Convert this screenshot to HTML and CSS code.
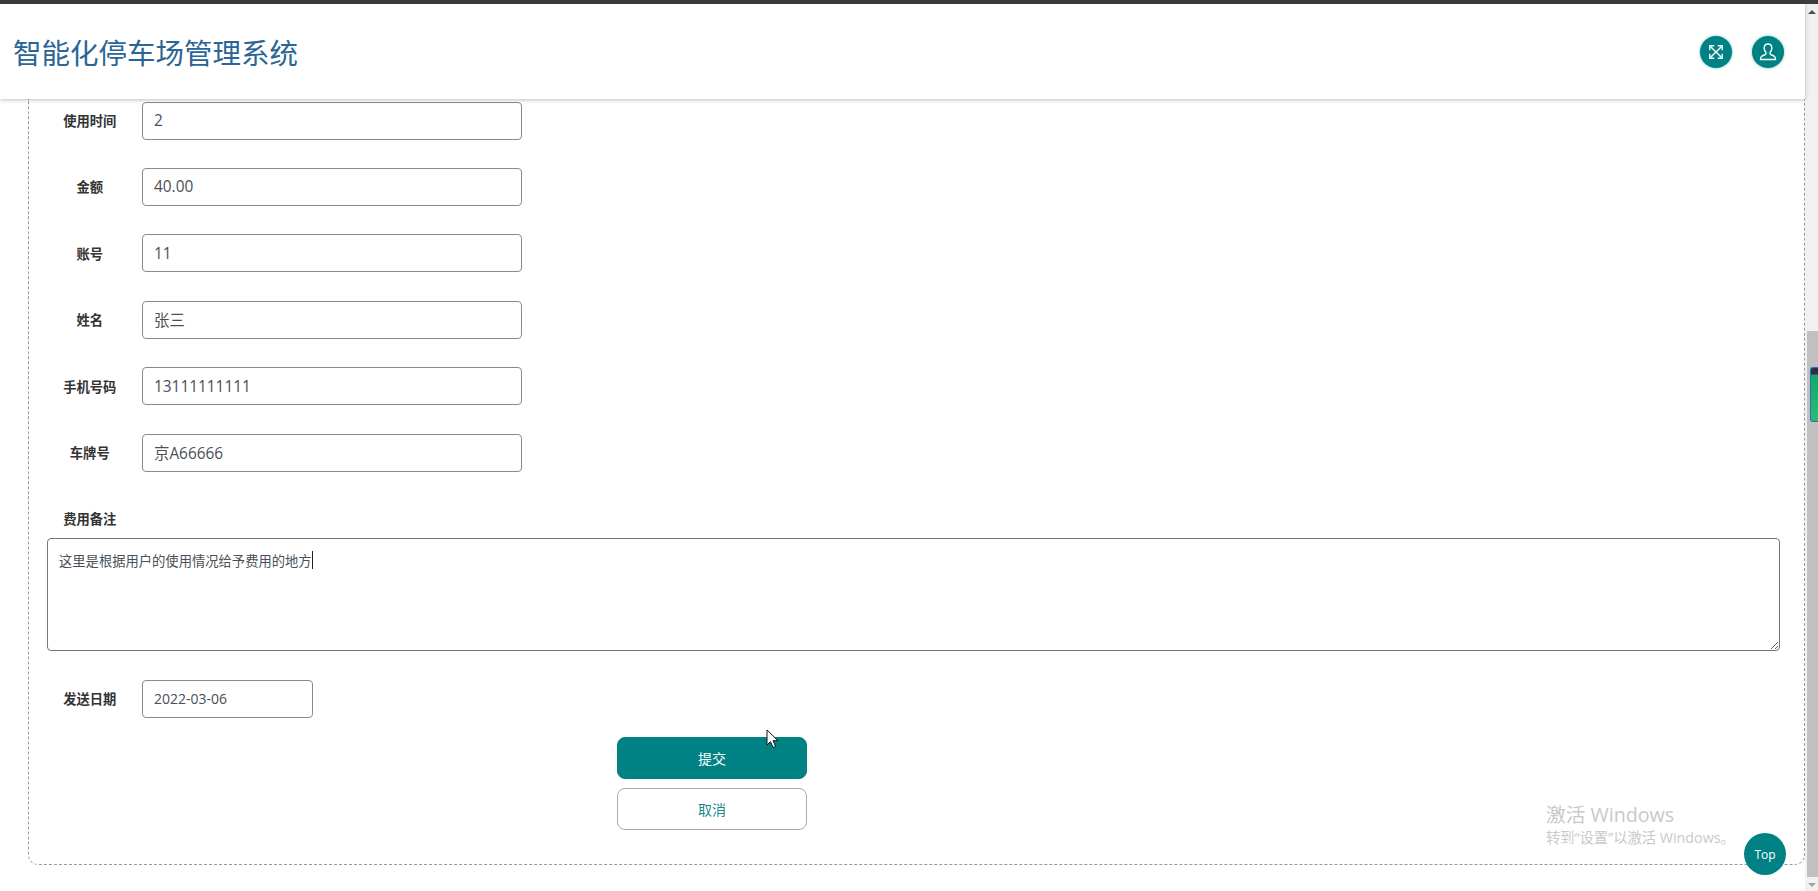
FILE: index.html
```html
<!DOCTYPE html>
<html lang="zh-CN">
<head>
    <meta charset="UTF-8">
    <title>智能化停车场管理系统</title>
    <link rel="stylesheet" href="styles.css">
</head>
<body>
    <div class="top-strip"></div>

    <div class="app">
        <div class="page">
            <header class="header">
                <h1 class="title">智能化停车场管理系统</h1>
                <div class="header-actions">
                    <span class="round-btn">
                        <svg width="16" height="16" viewBox="0 0 18 18" fill="none" stroke="#fff" stroke-width="1.6">
                            <path d="M3 3l12 12M15 3L3 15"/>
                            <path d="M2 7V2h5M11 2h5v5M16 11v5h-5M7 16H2v-5" stroke-width="1.5"/>
                        </svg>
                    </span>
                    <span class="round-btn">
                        <svg width="20" height="20" viewBox="0 0 20 20" fill="none" stroke="#fff" stroke-width="1.4">
                            <path d="M10 2c-2.4 0-3.8 1.8-3.8 4 0 1.8.7 3.3 1.7 4.2v1.3c0 .7-.5 1.1-1.2 1.4l-2.6 1.1C3 14.600 2.500 15.500 2.500 17.500h15c0-2-.5-2.900-1.600-3.500l-2.600-1.100c-.7-.3-1.200-.7-1.200-1.400v-1.300c1-.9 1.700-2.400 1.700-4.200 0-2.200-1.400-4-3.800-4z"/>
                        </svg>
                    </span>
                </div>
            </header>

            <main class="content">
                <form class="card">
                    <div class="form-row">
                        <label class="form-label">使用时间</label>
                        <input class="form-input" type="text" value="2">
                    </div>
                    <div class="form-row">
                        <label class="form-label">金额</label>
                        <input class="form-input" type="text" value="40.00">
                    </div>
                    <div class="form-row">
                        <label class="form-label">账号</label>
                        <input class="form-input" type="text" value="11">
                    </div>
                    <div class="form-row">
                        <label class="form-label">姓名</label>
                        <input class="form-input" type="text" value="张三">
                    </div>
                    <div class="form-row">
                        <label class="form-label">手机号码</label>
                        <input class="form-input" type="text" value="13111111111">
                    </div>
                    <div class="form-row">
                        <label class="form-label">车牌号</label>
                        <input class="form-input" type="text" value="京A66666">
                    </div>

                    <label class="form-label note-label">费用备注</label>
                    <div class="note-wrap">
                        <textarea class="note">这里是根据用户的使用情况给予费用的地方</textarea>
                        <span class="caret"></span>
                    </div>

                    <div class="form-row date-row">
                        <label class="form-label">发送日期</label>
                        <input class="form-input date-input" type="text" value="2022-03-06">
                    </div>

                    <div class="actions">
                        <button class="btn btn-primary" type="button">提交</button>
                        <button class="btn btn-cancel" type="button">取消</button>
                    </div>
                </form>
            </main>
        </div>

        <!-- page scrollbar -->
        <div class="scrollbar">
            <span class="arrow arrow-up"></span>
            <div class="track"><div class="thumb"></div></div>
            <span class="arrow arrow-down"></span>
        </div>
    </div>

    <div class="side-widget"></div>

    <div class="watermark">
        <div class="watermark-title">激活 Windows</div>
        <div class="watermark-sub">转到“设置”以激活 Windows。</div>
    </div>

    <a class="to-top">Top</a>

    <svg class="pointer" width="14" height="20" viewBox="0 0 14 20">
        <path d="M1 1v15l3.500-3.300 2.500 5.800 2.600-1.100-2.500-5.700H12z" fill="#fff" stroke="#111" stroke-width="1"/>
    </svg>
</body>
</html>
```

FILE: styles.css
```css
* {
    box-sizing: border-box;
}

html, body {
    height: 100%;
    margin: 0;
    overflow: hidden;
}

body {
    position: relative;
    display: flex;
    flex-direction: column;
    background-color: #fff;
    color: #495057;
    font-family: "Open Sans", "Noto Sans CJK SC", sans-serif;
}

.top-strip {
    height: 4px;
    flex: none;
    background-color: #3a3c41;
}

.app {
    flex: 1;
    display: flex;
    min-height: 0;
}

.page {
    flex: 1;
    min-width: 0;
    display: flex;
    flex-direction: column;
}

/* Header */
.header {
    position: relative;
    z-index: 2;
    flex: none;
    height: 95px;
    display: flex;
    align-items: center;
    justify-content: space-between;
    padding: 0 19px 0 13px;
    background-color: #fff;
    box-shadow: 0 1px 4px rgba(0, 0, 0, 0.25);
}

.title {
    margin: 0 0 1px;
    font-size: 28.5px;
    font-weight: 400;
    color: #2b6596;
}

.header-actions {
    display: flex;
    gap: 20px;
    margin-right: 2px;
}

.round-btn {
    width: 32px;
    height: 32px;
    display: flex;
    align-items: center;
    justify-content: center;
    border-radius: 50%;
    background-color: #008285;
    box-shadow: 0 0 3px rgba(0, 130, 133, 0.5);
}

/* Form */
.content {
    flex: 1;
    padding: 0 0 0 28px;
}

.card {
    height: 766px;
    padding: 2.6px 24px 0 18px;
    border: 1px dashed #999;
    border-top: none;
    border-radius: 0 0 10px 10px;
}

.form-row {
    display: flex;
    align-items: center;
    margin-bottom: 28.4px;
}

.form-label {
    width: 85.5px;
    margin-right: 9.5px;
    flex: none;
    text-align: center;
    font-size: 13.3px;
    font-weight: 700;
    color: #333;
}

.form-input {
    width: 379.5px;
    height: 38px;
    padding: 0 11px;
    border: 1px solid #8a8a8a;
    border-radius: 4px;
    background-color: #fff;
    font-family: inherit;
    font-size: 15.4px;
    color: #495057;
}

.note-label {
    display: block;
    margin: 38px 0 0;
    line-height: 18px;
}

.note-wrap {
    position: relative;
    margin-top: 10px;
}

.note {
    display: block;
    width: 100%;
    height: 113px;
    padding: 12px 11px;
    border: 1px solid #777;
    border-radius: 4px;
    font-family: inherit;
    font-size: 13.3px;
    line-height: 20px;
    color: #495057;
}

.caret {
    position: absolute;
    left: 265px;
    top: 13px;
    width: 1px;
    height: 18px;
    background-color: #222;
}

.date-row {
    margin: 29px 0 0;
}

.date-input {
    width: 170.5px;
    font-size: 14px;
}

.actions {
    display: flex;
    flex-direction: column;
    gap: 9px;
    width: 190px;
    margin: 19px 0 0 570px;
}

.btn {
    height: 42px;
    border-radius: 8px;
    font-family: inherit;
    font-size: 14px;
}

.btn-primary {
    border: 1px solid #008285;
    background-color: #008285;
    color: #fff;
}

.btn-cancel {
    border: 1px solid #aaa;
    background-color: #fff;
    color: #1b8a8d;
}

/* Scrollbar */
.scrollbar {
    flex: none;
    width: 13px;
    display: flex;
    flex-direction: column;
    background-color: #f1f1f1;
}

.arrow {
    flex: none;
    height: 17px;
    display: flex;
    justify-content: center;
}

.arrow::before {
    content: "";
    width: 0;
    height: 0;
    margin-top: 6px;
    border-left: 4px solid transparent;
    border-right: 4px solid transparent;
}

.arrow-up::before {
    border-bottom: 4px solid #505050;
}

.arrow-down::before {
    border-top: 4px solid #a3a3a3;
}

.track {
    flex: 1;
    padding: 310px 0 0 2px;
}

.thumb {
    height: 546px;
    background-color: #c1c1c1;
}

/* Overlays */
.side-widget {
    position: absolute;
    left: 1810px;
    top: 367px;
    width: 8px;
    height: 55px;
    border: 1px solid #2a6fc0;
    border-right: none;
    border-radius: 3px 0 0 3px;
    background: linear-gradient(#2c3142 0, #2c3142 6px, #12a968 7px, #2dbb70 100%);
}

.watermark {
    position: absolute;
    left: 1546px;
    top: 802px;
    color: #c9c9c9;
}

.watermark-title {
    font-size: 19.7px;
    line-height: 26px;
}

.watermark-sub {
    font-size: 14.3px;
    line-height: 20px;
}

.to-top {
    position: absolute;
    left: 1744px;
    top: 833px;
    width: 42px;
    height: 42px;
    display: flex;
    align-items: center;
    justify-content: center;
    border-radius: 50%;
    background-color: #008285;
    color: #fff;
    font-size: 12px;
}

.pointer {
    position: absolute;
    left: 766px;
    top: 729px;
}
```
